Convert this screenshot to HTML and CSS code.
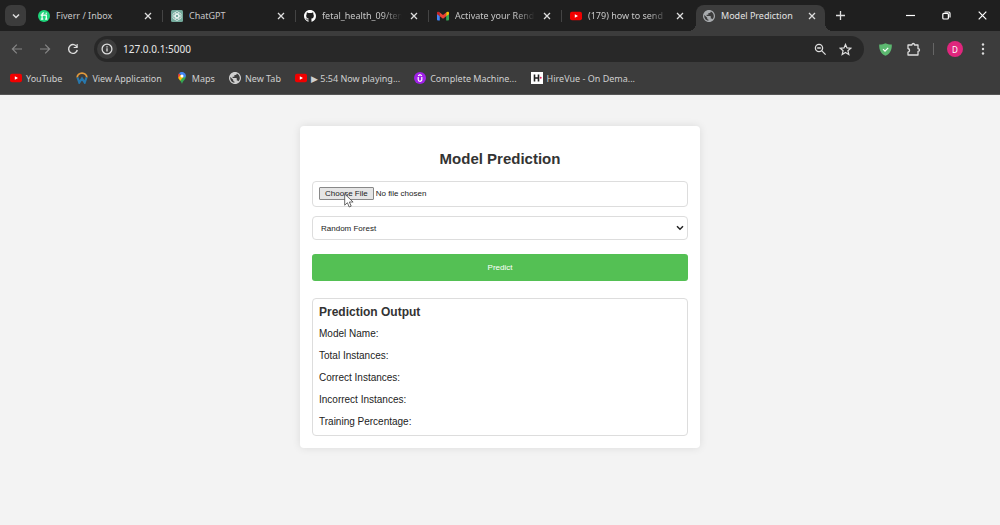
FILE: index.html
```
<!DOCTYPE html>
<html lang="en">
<head>
    <meta charset="UTF-8">
    <meta name="viewport" content="width=device-width, initial-scale=1.0">
    <title>Model Prediction</title>
    <link rel="stylesheet" href="styles.css">
</head>
<body>
<!-- shared icons -->
<svg class="sprite" width="0" height="0" aria-hidden="true">
    <symbol id="close" viewBox="0 0 8 8"><path d="M1 1l6 6M7 1L1 7" fill="none" stroke="currentColor" stroke-width="1.3"/></symbol>
    <symbol id="youtube" viewBox="0 0 12 12"><rect y="1.7" width="12" height="8.6" rx="2" fill="#f00000"/><path d="M4.8 4.2v3.6L8 6z" fill="#fff"/></symbol>
    <symbol id="globe" viewBox="2 2 20 20"><path fill="currentColor" d="M12 2C6.48 2 2 6.48 2 12s4.48 10 10 10 10-4.48 10-10S17.52 2 12 2z"/><path fill="#3c3c3c" d="M4.2 10.2L9 15v1c0 1.1.9 2 2 2v1.9c-4-.5-7-3.850-7-7.900 0-.6.1-1.200.2-1.800zM17.900 17.400c-.3-.8-1-1.400-1.900-1.400h-1v-3c0-.5-.5-1-1-1H8v-2h2c.5 0 1-.5 1-1V7h2c1.100 0 2-.9 2-2v-.4c2.900 1.200 5 4.100 5 7.400 0 2.100-.8 4-2.100 5.400z"/></symbol>
</svg>

<header class="browser">
    <div class="tab-strip">
        <button class="tab-search" aria-label="Search tabs"><svg width="8" height="8" viewBox="0 0 8 8"><path d="M1 2.5l3 3 3-3" fill="none" stroke="currentColor" stroke-width="1.5"/></svg></button>
        <div class="tabs">
            <div class="tab">
                <svg class="favicon" viewBox="0 0 12 12"><circle cx="6" cy="6" r="6" fill="#1ed47a"/><path d="M2.6 5.2h5.7v4M4.1 9.2V4.5c0-1.1.7-1.7 2-1.5M2.8 9.2h2.5M7.1 9.2h2.3" fill="none" stroke="#fff" stroke-width="1.2"/><circle cx="8.2" cy="3.3" r=".7" fill="#fff"/></svg>
                <a class="tab-title" href="#">Fiverr / Inbox</a>
                <button class="tab-close" aria-label="Close tab"><svg><use href="#close"/></svg></button>
            </div>
            <div class="tab">
                <svg class="favicon" viewBox="0 0 12 12"><rect width="12" height="12" rx="1.5" fill="#74aa9c"/><g fill="none" stroke="#e8f3f0" stroke-width=".7"><rect x="4.2" y="1.5" width="3.6" height="6.2" rx="1.8"/><rect x="4.2" y="1.5" width="3.6" height="6.2" rx="1.8" transform="rotate(60 6 6)"/><rect x="4.2" y="1.5" width="3.6" height="6.2" rx="1.8" transform="rotate(120 6 6)"/><rect x="4.2" y="1.5" width="3.6" height="6.2" rx="1.8" transform="rotate(180 6 6)"/><rect x="4.2" y="1.5" width="3.6" height="6.2" rx="1.8" transform="rotate(240 6 6)"/><rect x="4.2" y="1.5" width="3.6" height="6.2" rx="1.8" transform="rotate(300 6 6)"/></g></svg>
                <a class="tab-title" href="#">ChatGPT</a>
                <button class="tab-close" aria-label="Close tab"><svg><use href="#close"/></svg></button>
            </div>
            <div class="tab">
                <svg class="favicon" viewBox="0 0 16 16"><path fill="#fff" d="M8 0C3.58 0 0 3.58 0 8c0 3.54 2.29 6.53 5.47 7.59.4.07.55-.17.55-.38v-1.49c-2.01.37-2.53-.49-2.69-.94-.09-.23-.48-.94-.82-1.13-.28-.15-.68-.52-.01-.53.63-.01 1.08.58 1.23.82.72 1.21 1.87.87 2.33.66.07-.52.28-.87.51-1.07-1.78-.2-3.64-.89-3.64-3.95 0-.87.31-1.59.82-2.15-.08-.2-.36-1.02.08-2.12 0 0 .67-.21 2.2.82A7.6 7.6 0 0 1 8 3.86c.68 0 1.36.09 2 .27 1.53-1.04 2.2-.82 2.2-.82.44 1.1.16 1.92.08 2.12.51.56.82 1.27.82 2.15 0 3.07-1.87 3.75-3.65 3.95.29.25.54.73.54 1.48v2.2c0 .21.15.46.55.38A8 8 0 0 0 16 8c0-4.42-3.58-8-8-8z"/></svg>
                <a class="tab-title faded" href="#">fetal_health_09/ten</a>
                <button class="tab-close" aria-label="Close tab"><svg><use href="#close"/></svg></button>
            </div>
            <div class="tab">
                <svg class="favicon" viewBox="0 0 12 12"><path d="M0 2.5h2.8v8H1a1 1 0 0 1-1-1z" fill="#4285f4"/><path d="M9.2 2.5H12v7a1 1 0 0 1-1 1H9.2z" fill="#34a853"/><path d="M9.2 2.6l.9-.7c.8-.6 1.9 0 1.9 1v1.3L9.2 6.3z" fill="#fbbc04"/><path d="M2.8 2.6L6 5l3.2-2.4v3.7L6 8.7 2.8 6.3z" fill="#ea4335"/><path d="M0 2.9c0-1 1.1-1.6 1.9-1l.9.7v3.7L0 4.2z" fill="#c5221f"/></svg>
                <a class="tab-title faded" href="#">Activate your Rend</a>
                <button class="tab-close" aria-label="Close tab"><svg><use href="#close"/></svg></button>
            </div>
            <div class="tab">
                <svg class="favicon"><use href="#youtube"/></svg>
                <a class="tab-title faded" href="#">(179) how to send</a>
                <button class="tab-close" aria-label="Close tab"><svg><use href="#close"/></svg></button>
            </div>
            <div class="tab active">
                <svg class="favicon"><use href="#globe"/></svg>
                <a class="tab-title" href="#">Model Prediction</a>
                <button class="tab-close" aria-label="Close tab"><svg><use href="#close"/></svg></button>
            </div>
        </div>
        <button class="new-tab" aria-label="New tab"><svg width="9" height="9" viewBox="0 0 9 9"><path d="M4.5 0v9M0 4.5h9" stroke="currentColor" stroke-width="1.3"/></svg></button>
        <div class="window-controls">
            <button aria-label="Minimize"><svg width="9" height="9" viewBox="0 0 9 9"><path d="M0 4.5h9" stroke="currentColor" stroke-width="1.2"/></svg></button>
            <button aria-label="Restore"><svg width="9" height="9" viewBox="0 0 9 9"><g fill="none" stroke="currentColor" stroke-width="1.2"><rect x=".8" y="2.4" width="5.6" height="5.6" rx="1"/><path d="M2.6 1h4a1.4 1.4 0 0 1 1.4 1.4v4"/></g></svg></button>
            <button aria-label="Close window"><svg width="9" height="9" viewBox="0 0 9 9"><path d="M.7.7l7.6 7.6M8.3.7L.7 8.3" stroke="currentColor" stroke-width="1.2"/></svg></button>
        </div>
    </div>

    <div class="toolbar">
        <button class="nav disabled" aria-label="Back" disabled><svg viewBox="0 0 12 12"><path d="M11 6H1.6M5.8 1.6L1.4 6l4.4 4.4" fill="none" stroke="currentColor" stroke-width="1.2"/></svg></button>
        <button class="nav disabled" aria-label="Forward" disabled><svg viewBox="0 0 12 12"><path d="M1 6h9.4M6.2 1.6L10.6 6l-4.4 4.4" fill="none" stroke="currentColor" stroke-width="1.2"/></svg></button>
        <button class="nav" aria-label="Reload"><svg viewBox="0 0 12 12"><path d="M10 4.1A4.4 4.4 0 1 0 10.3 7" fill="none" stroke="currentColor" stroke-width="1.4"/><path d="M10.7 1v4H6.7V3.9h2.9V1z" fill="currentColor"/></svg></button>
        <div class="address">
            <button class="site-info" aria-label="Site information"><svg width="12" height="12" viewBox="0 0 12 12"><circle cx="6" cy="6" r="4.9" fill="none" stroke="currentColor" stroke-width="1.3"/><path d="M6 5.3v3.3M6 3.2v1.3" stroke="currentColor" stroke-width="1.3"/></svg></button>
            <input type="text" value="127.0.0.1:5000" aria-label="Address">
            <button class="address-btn" aria-label="Zoom"><svg width="13" height="13" viewBox="0 0 13 13"><circle cx="5" cy="5" r="3.6" fill="none" stroke="currentColor" stroke-width="1.3"/><path d="M7.6 7.6l4 4M3.2 5h3.6" stroke="currentColor" stroke-width="1.3"/></svg></button>
            <button class="address-btn" aria-label="Bookmark this page"><svg width="13" height="13" viewBox="0 0 13 13"><path d="M6.5 1.4l1.5 3.5 3.8.3-2.9 2.5.9 3.7-3.3-2-3.3 2 .9-3.7-2.9-2.5 3.8-.3z" fill="none" stroke="currentColor" stroke-width="1.2"/></svg></button>
        </div>
        <button class="shield" aria-label="Ad blocker"><svg width="13" height="13" viewBox="0 0 13 13"><path d="M.2 1.5C3 1.4 4.800 1 6.500.2 8.200 1 10 1.400 12.800 1.500c.2 5.300-1.500 9.200-6.300 11.300C1.700 10.700 0 6.800.2 1.500z" fill="#5cb870"/><path d="M4 6.200l2 2 3.200-3.400" fill="none" stroke="#fff" stroke-width="1.2"/></svg></button>
        <button class="extensions" aria-label="Extensions"><svg width="15" height="15" viewBox="0 0 15 15"><path d="M2 3h3.900c0-2 2.600-2 2.600 0H12v3.700c2 .1 2 2.500 0 2.600V13H2v-2.900c2.100-.4 2.100-3.200 0-3.600z" fill="none" stroke="currentColor" stroke-width="1.3" stroke-linejoin="round"/></svg></button>
        <span class="divider"></span>
        <button class="profile" aria-label="Profile">D</button>
        <button class="more" aria-label="Menu"><svg width="4" height="12" viewBox="0 0 4 12"><g fill="currentColor"><circle cx="2" cy="1.5" r="1.2"/><circle cx="2" cy="6" r="1.2"/><circle cx="2" cy="10.5" r="1.2"/></g></svg></button>
    </div>

    <nav class="bookmarks">
        <a href="#"><svg><use href="#youtube"/></svg>YouTube</a>
        <a href="#"><svg viewBox="0 0 12 12"><path d="M1.200 5.500a4.800 4.400 0 0 1 9.600 0" fill="none" stroke="#e39a3b" stroke-width="1.800"/><path d="M1.500 5.500l1.800 5L6 6.500l2.700 4 1.800-5" fill="none" stroke="#2878ad" stroke-width="2.200"/></svg>View Application</a>
        <a href="#"><svg viewBox="0 0 12 12"><path d="M6 12C5.500 9 2 7.500 2 4h8c0 3.500-3.500 5-4 8z" fill="#34a853"/><path d="M2 4a4 4 0 0 1 1-2.700L6 4 3 7.400C2.300 6.400 2 5.300 2 4z" fill="#ea4335"/><path d="M3 1.300A4 4 0 0 1 10 4L8 6 6 4z" fill="#4285f4"/><path d="M2.300 5.800L4.600 3l2.800 2-3.200 3.800z" fill="#fbbc04"/><circle cx="6" cy="4" r="1.500" fill="#fff"/></svg>Maps</a>
        <a href="#"><svg><use href="#globe"/></svg>New Tab</a>
        <a href="#"><svg><use href="#youtube"/></svg>▶ 5:54 Now playing...</a>
        <a href="#"><svg viewBox="0 0 12 12"><circle cx="6" cy="6" r="6" fill="#a020e8"/><path d="M4.200 5v2.500a1.800 1.800 0 0 0 3.600 0V5M4.100 3.800L6 2.700l1.900 1.100" fill="none" stroke="#fff" stroke-width="1.2"/></svg>Complete Machine...</a>
        <a href="#"><svg viewBox="0 0 12 12"><path d="M0 0h12v12H0z" fill="#fff"/><path d="M3.500 2.500v7M7.500 2.500v7M3.500 6h4" stroke="#222" stroke-width="1.6"/><circle cx="9.700" cy="5.800" r="1" fill="#e0245e"/></svg>HireVue - On Dema...</a>
    </nav>
</header>

<main class="page">
    <div class="container">
        <h1>Model Prediction</h1>
        <form>
            <div class="file-row">
                <input type="file" aria-label="Data file">
                <svg class="cursor" width="10" height="15" viewBox="0 0 10 15"><path d="M.7 1v11.200l2.700-2.500L5.200 14l2-.9-1.800-4.100h3.700z" fill="#fff" stroke="#444" stroke-width=".8"/></svg>
            </div>
            <div class="select-row">
                <select aria-label="Model">
                    <option>Random Forest</option>
                </select>
                <svg class="arrow" width="8" height="6" viewBox="0 0 8 6"><path d="M1 1.300l3 3 3-3" fill="none" stroke="#222" stroke-width="1.5"/></svg>
            </div>
            <button class="predict" type="button">Predict</button>
        </form>
        <section class="output">
            <h2>Prediction Output</h2>
            <p>Model Name:</p>
            <p>Total Instances:</p>
            <p>Correct Instances:</p>
            <p>Incorrect Instances:</p>
            <p>Training Percentage:</p>
        </section>
    </div>
</main>
</body>
</html>
```
FILE: styles.css
```
*{
    box-sizing: border-box;
}
body{
    margin: 0;
    min-height: 100vh;
    display: flex;
    flex-direction: column;
    font-family: "Liberation Sans", Arial, sans-serif;
    background: #f3f3f3;
}
button{
    padding: 0;
    border: 0;
    background: none;
    color: inherit;
    font-family: inherit;
    display: flex;
    align-items: center;
    justify-content: center;
    flex: none;
}
a{
    color: inherit;
    text-decoration: none;
}
svg{
    display: block;
    flex: none;
}
.sprite{
    position: absolute;
}

/* browser frame */
.browser{
    background: #3c3c3c;
    color: #dedede;
    font-family: "Noto Sans", "Open Sans", sans-serif;
    font-size: 9px;
    border-bottom: 1px solid #555;
}
.tab-strip{
    display: flex;
    align-items: center;
    height: 31px;
    padding-left: 5px;
    background: #1f1f1f;
}
.tab-search{
    width: 21px;
    height: 21px;
    margin-right: 4px;
    border-radius: 6px;
    background: #3c3c3c;
}
.tabs{
    display: flex;
    flex: 0 1 798px;
    min-width: 0;
    height: 31px;
    padding-top: 5px;
}
.tab{
    display: flex;
    align-items: center;
    flex: 1 1 0;
    min-width: 0;
    padding: 0 11px 4px 8px;
    position: relative;
}
.tab::after{
    content: "";
    position: absolute;
    right: 0;
    top: 5px;
    width: 1px;
    height: 12px;
    background: #444;
}
.tab:nth-last-child(2)::after{
    display: none;
}
.favicon{
    width: 12px;
    height: 12px;
    margin-right: 6px;
}
.tab-title{
    flex: 1;
    min-width: 0;
    overflow: hidden;
    white-space: nowrap;
    line-height: 14px;
    margin-right: 8px;
    color: #c8c8c8;
}
.faded{
    -webkit-mask-image: linear-gradient(to left, transparent, #000 20px);
    mask-image: linear-gradient(to left, transparent, #000 20px);
}
.tab-close svg{
    width: 8px;
    height: 8px;
}
.tab.active{
    flex: 0 0 129px;
    margin: 0 3px 0 1px;
    padding-left: 7px;
    padding-right: 9px;
    background: #3c3c3c;
    border-radius: 8px 8px 0 0;
}
.tab.active .favicon{
    color: #a8abae;
}
.tab.active .tab-title{
    color: #e3e3e3;
}
/* curved feet of the active tab */
.tab.active::before,
.tab.active::after{
    content: "";
    position: absolute;
    top: auto;
    bottom: 0;
    width: 8px;
    height: 8px;
}
.tab.active::before{
    left: -8px;
    background: radial-gradient(circle at 0 0, transparent 8px, #3c3c3c 8px);
}
.tab.active::after{
    right: -8px;
    background: radial-gradient(circle at 100% 0, transparent 8px, #3c3c3c 8px);
}
.new-tab{
    width: 24px;
    height: 24px;
}
.window-controls{
    display: flex;
    margin-left: auto;
}
.window-controls button{
    width: 36px;
    height: 31px;
    color: #fff;
}

.toolbar{
    display: flex;
    align-items: center;
    height: 36px;
    padding-left: 3px;
    padding-right: 7px;
}
.nav{
    width: 28px;
    height: 24px;
}
.nav svg{
    width: 12px;
    height: 12px;
}
.disabled{
    color: #868686;
}
.address{
    display: flex;
    align-items: center;
    flex: 1;
    min-width: 0;
    height: 26px;
    margin-left: 7px;
    padding: 0 6px 0 3px;
    border-radius: 13px;
    background: #282828;
}
.site-info{
    width: 20px;
    height: 20px;
    border-radius: 50%;
    background: #3c3c3c;
}
.address input{
    flex: 1;
    min-width: 0;
    padding: 0;
    margin-left: 6px;
    border: 0;
    outline: 0;
    background: none;
    color: #e8e8e8;
    font-family: inherit;
    font-size: 10px;
}
.address-btn{
    width: 25px;
    height: 24px;
}
.shield{
    width: 26px;
    height: 24px;
    margin-left: 8px;
}
.extensions{
    width: 30px;
    height: 24px;
}
.divider{
    width: 1px;
    height: 12px;
    margin: 0 13px 0 5px;
    background: #666;
}
.profile{
    width: 16px;
    height: 16px;
    border-radius: 50%;
    background: #e0267d;
    color: #fff;
    font-size: 8px;
}
.more{
    width: 20px;
    height: 24px;
    margin-left: 10px;
}

.bookmarks{
    display: flex;
    align-items: center;
    gap: 14px;
    height: 27px;
    padding: 0 10px 5px;
    white-space: nowrap;
    overflow: hidden;
    color: #cfcfcf;
}
.bookmarks a{
    display: flex;
    align-items: center;
    gap: 4px;
}
.bookmarks svg{
    width: 12px;
    height: 12px;
}

/* prediction page */
.page{
    flex: 1;
    padding: 31px 12px;
}
.container{
    max-width: 400px;
    margin: 0 auto;
    padding: 24px 12px 12px;
    background: #fff;
    border-radius: 4px;
    box-shadow: 0 0 8px rgba(0, 0, 0, 0.1);
}
h1{
    margin: 0 0 13px;
    font-size: 15px;
    line-height: 18px;
    text-align: center;
    color: #333;
}
.file-row,
.select-row{
    position: relative;
}
.file-row input{
    display: block;
    width: 100%;
    height: 26px;
    padding: 5px 6px;
    border: 1px solid #ddd;
    border-radius: 4px;
    font-family: inherit;
    font-size: 8px;
    line-height: 12px;
    color: #222;
}
.file-row input::file-selector-button{
    height: 13px;
    margin: 0 2px 0 0;
    padding: 0 5px;
    border: 1px solid #888;
    border-radius: 1px;
    background: #e5e5e5;
    font-family: inherit;
    font-size: 8px;
    line-height: 11px;
    color: #222;
}
.cursor{
    position: absolute;
    left: 32px;
    top: 12px;
}
.select-row{
    margin-top: 9px;
}
select{
    display: block;
    width: 100%;
    height: 24px;
    padding: 0 8px;
    border: 1px solid #ddd;
    border-radius: 4px;
    background: #fff;
    color: #222;
    font-family: inherit;
    font-size: 8px;
    -webkit-appearance: none;
    appearance: none;
}
.arrow{
    position: absolute;
    right: 4px;
    top: 9px;
    pointer-events: none;
}
.predict{
    width: 100%;
    height: 27px;
    margin-top: 14px;
    border-radius: 3px;
    background: #54c054;
    color: #fff;
    font-size: 8px;
}
.output{
    margin-top: 17px;
    padding: 6px 6px 2px;
    border: 1px solid #ddd;
    border-radius: 4px;
}
h2{
    margin: 0 0 4px;
    font-size: 12px;
    line-height: 14px;
    color: #333;
}
.output p{
    margin: 0;
    font-size: 10px;
    line-height: 22px;
    color: #222;
}
```
